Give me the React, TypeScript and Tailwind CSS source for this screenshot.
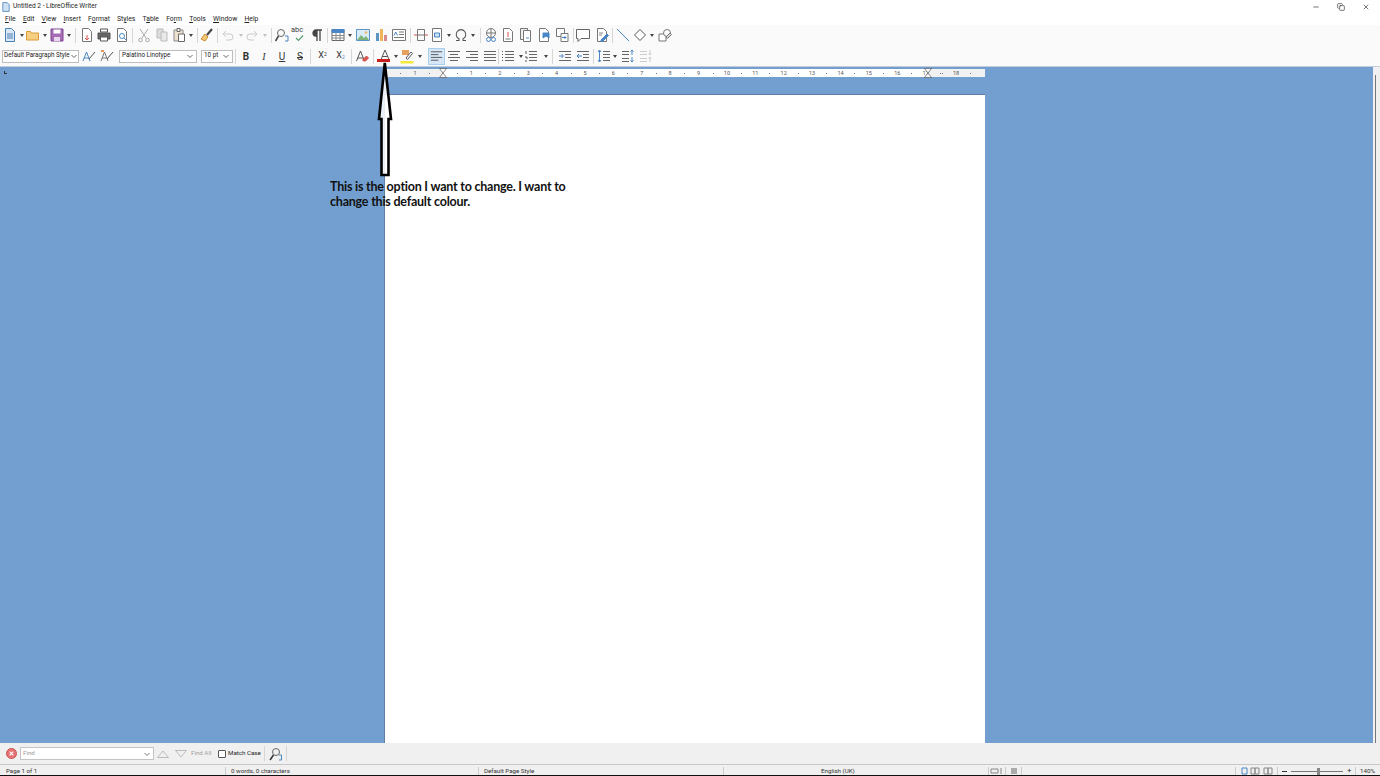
import type { ReactNode } from 'react';
import { Minus, Copy, X } from 'lucide-react';

const menus: [string, string, string][] = [
  ['', 'F', 'ile'], ['', 'E', 'dit'], ['', 'V', 'iew'], ['', 'I', 'nsert'], ['F', 'o', 'rmat'], ['St', 'y', 'les'],
  ['T', 'a', 'ble'], ['Fo', 'r', 'm'], ['', 'T', 'ools'], ['', 'W', 'indow'], ['', 'H', 'elp'],
];

// small 16x16 drawing wrapper
function Ico({ children, className = '' }: { children: ReactNode; className?: string }) {
  return (
    <span className={`flex h-4 w-4 shrink-0 items-center justify-center ${className}`}>
      <svg viewBox="0 0 16 16" className="h-4 w-4" fill="none" stroke="#555" strokeWidth="1">
        {children}
      </svg>
    </span>
  );
}

function Drop({ className = '' }: { className?: string }) {
  return (
    <span className={`flex h-4 w-1.5 shrink-0 items-center justify-center ${className}`}>
      <span className="h-0 w-0 border-x-[2.5px] border-t-[3px] border-x-transparent border-t-[#444]" />
    </span>
  );
}

function Sep({ className = '' }: { className?: string }) {
  return <span className={`h-[15px] w-px shrink-0 bg-[#d6d6d6] ${className}`} />;
}

function Lines({ rows, color = '#666' }: { rows: [number, number][]; color?: string }) {
  return (
    <>
      {rows.map(([a, b], i) => (
        <path key={i} d={`M${a} ${3.5 + i * 3}H${b}`} stroke={color} />
      ))}
    </>
  );
}

function Combo({ label, className, pad = 'pl-0.5' }: { label: string; className: string; pad?: string }) {
  return (
    <div className={`flex h-[13px] shrink-0 items-center justify-between border border-[#bdbdbd] bg-white pr-0.5 text-[6.3px] text-[#222] ${pad} ${className}`}>
      <span className="whitespace-nowrap">{label}</span>
      <svg viewBox="0 0 8 8" className="h-2 w-2 shrink-0" fill="none" stroke="#666"><path d="M1.5 3 4 5.5 6.5 3" /></svg>
    </div>
  );
}

function TopToolbar() {
  return (
    <div className="flex h-5 items-center pl-0.5">
      <Ico><path d="M3.5 1.5h6l3 3v10h-9z" fill="#dbe9f6" stroke="#4a7fb5" /><path d="M5 7h6M5 9h6M5 11h6" stroke="#4a7fb5" /></Ico>
      <Drop className="ml-px" />
      <Ico><path d="M1.5 4.5h4l1 1.5h7v7h-12z" fill="#f7cf83" stroke="#d89c3a" /></Ico>
      <Drop className="ml-px" />
      <Ico className="ml-px"><path d="M2 2h12v12H2z" fill="#a56cb5" stroke="#7c4490" /><path d="M4.5 2.5h7v4h-7z" fill="#fff" stroke="none" /><path d="M5 10h6v4H5z" fill="#e8d8ee" stroke="none" /></Ico>
      <Drop className="ml-px" />
      <Sep className="ml-[2.5px]" />
      <Ico className="ml-[3.5px]"><path d="M3.5 1.5h6l3 3v10h-9z" fill="#fff" stroke="#777" /><path d="M8 8v5M6 11l2 2 2-2" stroke="#d9534f" /></Ico>
      <Ico className="ml-px"><path d="M4.5 2h7v3h-7z" fill="#fff" /><path d="M2 6h12v6H2z" fill="#666" stroke="#555" /><path d="M4.5 10h7v4h-7z" fill="#fff" /></Ico>
      <Ico className="ml-0.5"><path d="M3.5 1.5h6l3 3v10h-9z" fill="#fff" stroke="#777" /><circle cx="8" cy="9" r="2.5" stroke="#4a86c5" /><path d="m10 11 2.5 2.5" stroke="#4a86c5" /></Ico>
      <Sep className="ml-[1.5px]" />
      <Ico className="ml-[3.5px]"><g stroke="#aaa"><path d="m4 2 6 9M12 2l-6 9" /><circle cx="4.5" cy="13" r="1.8" /><circle cx="11.5" cy="13" r="1.8" /></g></Ico>
      <Ico className="ml-0.5"><path d="M3 2h6v9H3z" fill="#ddd" stroke="#bbb" /><path d="M7 5h6v9H7z" fill="#e8e8e8" stroke="#bbb" /></Ico>
      <Ico className="ml-px"><path d="M3 3h9v11H3z" fill="#efe3d0" stroke="#888" /><path d="M6 1.5h3v3H6z" fill="#fff" stroke="#666" /><path d="M7.5 7h6v7.5h-6z" fill="#fff" stroke="#666" /></Ico>
      <Drop className="ml-px" />
      <Sep className="ml-[2.5px]" />
      <Ico className="ml-[1.5px]"><path d="m13 2-5 6" stroke="#444" strokeWidth="2" /><path d="M6 7l3 3-3 4-4-2z" fill="#f5c671" stroke="#c98f35" /></Ico>
      <Sep className="ml-[1.5px]" />
      <Ico className="ml-[2.5px]"><path d="M3 7h7a3 3 0 0 1 0 6H6M3 7l3-3M3 7l3 3" stroke="#ccc" /></Ico>
      <Drop className="ml-0.5 opacity-30" />
      <Ico><path d="M13 7H6a3 3 0 0 0 0 6h4M13 7l-3-3M13 7l-3 3" stroke="#ccc" /></Ico>
      <Drop className="ml-0.5 opacity-30" />
      <Sep className="ml-[2.5px]" />
      <Ico className="ml-[2.5px]"><circle cx="7" cy="6" r="3.5" stroke="#666" /><path d="M4.5 9 1.5 14" stroke="#444" strokeWidth="1.5" /><path d="M11 9h3v5h-3" stroke="#4a86c5" /></Ico>
      <span className="relative ml-px h-4 w-4 shrink-0">
        <span className="absolute left-0 top-[-2px] text-[7.5px] leading-[9px] text-[#444]">abc</span>
        <svg viewBox="0 0 16 16" className="absolute inset-0 h-4 w-4" fill="none" stroke="#5a9e6f" strokeWidth="1.2"><path d="m5 11 2.5 2.5L12 8.5" /></svg>
      </span>
      <Ico className="ml-0.5"><path d="M7 3h6M7 3a3 3 0 0 0 0 6h1V3zM8 3v11M11 3v11" stroke="#444" strokeWidth="1.3" fill="#444" /></Ico>
      <Sep className="ml-[1.5px]" />
      <Ico className="ml-[2.5px]"><path d="M2 2.5h12v11H2z" fill="#fff" stroke="#666" /><path d="M2 2.5h12v3H2z" fill="#4a86c5" stroke="#4a86c5" /><path d="M2 8.5h12M2 11h12M6 5.5v8M10 5.5v8" stroke="#888" /></Ico>
      <Drop className="ml-px" />
      <Ico className="ml-0.5"><path d="M1.5 2.5h13v11h-13z" fill="#d9ecf8" stroke="#5e94c4" /><path d="m2 13 4-5 3 3 2-2 3 4z" fill="#7fb37a" stroke="none" /><circle cx="11" cy="5.5" r="1.3" fill="#f4b860" stroke="none" /></Ico>
      <Ico className="ml-0.5"><path d="M3 6h3v8H3z" fill="#5e94c4" stroke="none" /><path d="M7 2h3v12H7z" fill="#f0b45a" stroke="none" /><path d="M11 8h3v6h-3z" fill="#d98a8a" stroke="none" /></Ico>
      <Ico className="ml-0.5"><path d="M1.5 2.5h13v11h-13z" fill="#fff" stroke="#777" /><path d="M8 5h5M8 7.5h5M3 10.5h10" stroke="#777" /><path d="M3 8.5 4.7 5l1.8 3.5" stroke="#4a86c5" /></Ico>
      <Sep className="ml-[2.5px]" />
      <Ico className="ml-[2.5px]"><path d="M1 8h3M12 8h3" stroke="#d9534f" /><path d="M4.5 2.5h7M4.5 13.5h7M4.5 2.5v11M11.5 2.5v11" stroke="#777" /><path d="M5 8h6" stroke="#777" /></Ico>
      <Ico><path d="M3.5 1.5h9v13h-9z" fill="#fff" stroke="#777" /><path d="M5.5 6h5v4h-5z" fill="#cfe2f3" stroke="#4a86c5" /></Ico>
      <Drop className="ml-px" />
      <Ico className="ml-px"><path d="M3 13.5h3v-1.7a4.8 4.8 0 1 1 4 0v1.7h3" stroke="#555" strokeWidth="1.1" /></Ico>
      <Drop className="ml-px" />
      <Sep className="ml-[3.5px]" />
      <Ico className="ml-[2.5px]"><circle cx="8" cy="6" r="4.5" stroke="#777" /><path d="M3.5 6h9M8 1.5v9" stroke="#777" /><circle cx="5.5" cy="12.5" r="2" stroke="#4a86c5" /><circle cx="10.5" cy="12.5" r="2" stroke="#4a86c5" /></Ico>
      <Ico className="ml-px"><path d="M3.5 1.5h6l3 3v10h-9z" fill="#fff" stroke="#777" /><path d="M8 5v5" stroke="#d9534f" /><path d="M5.5 12h5" stroke="#777" /></Ico>
      <Ico className="ml-0.5"><path d="M2.5 1.5h7v11h-7z" fill="#eee" stroke="#777" /><path d="M5.5 3.5h7v11h-7z" fill="#fff" stroke="#777" /><path d="M8 11h3" stroke="#4a86c5" /></Ico>
      <Ico className="ml-0.5"><path d="M3.5 1.5h6l3 3v10h-9z" fill="#fff" stroke="#777" /><path d="M7 6h6v5l-3-2-3 2z" fill="#4a86c5" stroke="#4a86c5" /></Ico>
      <Ico className="ml-0.5"><path d="M2.5 1.5h8v8h-8z" fill="#fff" stroke="#777" /><path d="M7 6.5h7v8H7z" fill="#fff" stroke="#777" /><path d="M8 10.5h4M10.5 9l1.5 1.5-1.5 1.500" stroke="#4a86c5" /></Ico>
      <Sep className="ml-[2.5px]" />
      <Ico className="ml-[1.5px]"><path d="M1.5 2.5h13v9H6l-3 3v-3H1.5z" fill="#fff" stroke="#666" /></Ico>
      <Ico className="ml-[3px]"><path d="M3.5 1.5h6l3 3v10h-9z" fill="#fff" stroke="#777" /><path d="M5 6h4M5 8h3" stroke="#888" /><path d="m7 13 6-6 1.5 1.5-6 6H7z" fill="#4a86c5" stroke="#4a86c5" /></Ico>
      <Sep className="ml-[1.5px]" />
      <Ico className="ml-[2.5px]"><path d="m2 2 12 12" stroke="#4a86c5" /></Ico>
      <Ico className="ml-px"><path d="M8 2.5 13.5 8 8 13.5 2.5 8z" fill="#fff" stroke="#555" /></Ico>
      <Drop className="ml-px" />
      <Ico className="ml-0.5"><path d="M2 7h7v7H2z" fill="#fff" stroke="#777" /><circle cx="10" cy="6" r="3.5" fill="#fff" stroke="#777" /><path d="m9 10 4-4 1.5 1.5-4 4z" fill="#d6d6d6" stroke="#777" /></Ico>
    </div>
  );
}

function FormatToolbar() {
  return (
    <div className="flex h-5 items-center pl-0.5 text-[#444]">
      <Combo label="Default Paragraph Style" className="w-[77px]" pad="pl-px" />
      <Ico className="ml-[2px]"><path d="M2 13 5.5 4 9 13M3 10h5" stroke="#4a86c5" /><path d="m8 11 6-7" stroke="#555" /></Ico>
      <Ico className="ml-0.5"><path d="M2 13 5.5 4 9 13M3 10h5" stroke="#777" /><path d="m8 11 6-7" stroke="#555" /><path d="M2 2h3v2H2z" fill="#e89a5a" stroke="none" /></Ico>
      <Combo label="Palatino Linotype" className="ml-1 w-[78px]" pad="pl-0.5" />
      <Combo label="10 pt" className="ml-1 w-8" pad="pl-0.5" />
      <Sep className="ml-0.5" />
      <span className="ml-[2px] flex h-4 w-4 shrink-0 items-center justify-center text-[10px] font-bold text-[#333]">B</span>
      <span className="ml-0.5 flex h-4 w-4 shrink-0 items-center justify-center text-[10px] italic text-[#333] [font-family:'Liberation_Serif',serif]">I</span>
      <span className="ml-0.5 flex h-4 w-4 shrink-0 items-center justify-center text-[10px] text-[#333] underline">U</span>
      <span className="ml-0.5 flex h-4 w-4 shrink-0 items-center justify-center text-[10px] text-[#333] line-through">S</span>
      <Sep className="ml-0.5" />
      <span className="ml-[3.5px] flex h-4 w-4 shrink-0 items-center justify-center text-[9px] text-[#333]">X<sup className="text-[5px]">2</sup></span>
      <span className="ml-0.5 flex h-4 w-4 shrink-0 items-center justify-center text-[9px] text-[#333]">X<sub className="text-[5px] text-[#4a86c5]">2</sub></span>
      <Sep className="ml-0.5" />
      <Ico className="ml-[2.5px]"><path d="M2.5 13 6.5 3l4 10M4 10h5" stroke="#555" /><path d="m8.5 12 4-4 2 2-3 3h-2z" fill="#d9534f" stroke="#d9534f" /></Ico>
      <Sep className="ml-[2.5px]" />
      <Ico className="ml-[3.5px]"><path d="M4 11.5 8 2l4 9.5M5.2 8.5h5.6" stroke="#555" /></Ico>
      <Drop />
      <Ico><path d="M3 2h7v5H3z" fill="#e8a15c" stroke="none" /><path d="m7 10 5-6 1.5 1.5-5 6z" fill="#fff" stroke="#555" /><path d="M1.5 13h13v2.5h-13z" fill="#f5ea3c" stroke="none" /></Ico>
      <Drop className="ml-[1.5px]" />
      <span className="ml-[5.5px] flex h-[17px] w-[17px] shrink-0 items-center justify-center border border-[#a8cfee] bg-[#d5e7f6]">
        <svg viewBox="0 0 16 16" className="h-4 w-4" fill="none"><Lines rows={[[2, 14], [2, 10], [2, 14], [2, 10]]} color="#555" /></svg>
      </span>
      <Ico className="ml-px"><Lines rows={[[2, 14], [4, 12], [2, 14], [4, 12]]} /></Ico>
      <Ico className="ml-0.5"><Lines rows={[[2, 14], [6, 14], [2, 14], [6, 14]]} /></Ico>
      <Ico className="ml-0.5"><Lines rows={[[2, 14], [2, 14], [2, 14], [2, 14]]} /></Ico>
      <Sep />
      <Ico className="ml-px"><Lines rows={[[5, 14], [5, 14], [5, 14], [5, 14]]} /><path d="M2 3.5h1M2 9.5h1M2 6.5h1M2 12.5h1" stroke="#555" /></Ico>
      <Drop className="ml-0.5" />
      <Ico className="-ml-px"><Lines rows={[[6, 14], [6, 14], [6, 14], [6, 14]]} /><path d="M3 3v3M3 8v2h2M2 13h2" stroke="#555" /></Ico>
      <Drop className="ml-1" />
      <Sep className="ml-[2.5px]" />
      <Ico className="ml-[4.5px]"><Lines rows={[[2, 14], [8, 14], [8, 14], [2, 14]]} /><path d="M2 8h4M4.5 6 6.5 8l-2 2" stroke="#4a86c5" /></Ico>
      <Ico className="ml-0.5"><Lines rows={[[2, 14], [8, 14], [8, 14], [2, 14]]} /><path d="M7 8H2M4 6 2 8l2 2" stroke="#4a86c5" /></Ico>
      <Sep className="ml-[1.5px]" />
      <Ico className="ml-[2.5px]"><Lines rows={[[7, 14], [7, 14], [7, 14], [7, 14]]} /><path d="M3.5 2v12M2 4l1.5-2L5 4M2 12l1.5 2L5 12" stroke="#4a86c5" /></Ico>
      <Drop />
      <Ico className="ml-[2px]"><path d="M2 3.5h7M2 6.5h7M2 10.5h7M2 13.5h7" stroke="#666" /><path d="M12 7V2M10.5 3.5 12 2l1.5 1.5M12 9v5M10.5 12.5 12 14l1.5-1.5" stroke="#4a86c5" /></Ico>
      <Ico className="ml-0.5 opacity-30"><path d="M2 3.5h7M2 6.5h7M2 10.5h7M2 13.5h7" stroke="#666" /><path d="M12 2v5M10.5 5.5 12 7l1.5-1.5M12 14V9M10.5 10.5 12 9l1.5 1.5" stroke="#666" /></Ico>
    </div>
  );
}

function Hourglass({ className }: { className: string }) {
  return (
    <svg viewBox="0 0 8 10" className={`absolute top-[-1px] h-[10px] w-2 ${className}`} fill="#fff" stroke="#555" strokeWidth="0.7">
      <path d="M.5.5h7L.5 9.5h7z" />
    </svg>
  );
}

function Ruler() {
  const nums = ['', '1', '2', '3', '4', '5', '6', '7', '8', '9', '10', '11', '12', '13', '14', '15', '16', '17'];
  return (
    <div className="relative ml-[385px] mt-0.5 flex h-2 w-[600px] bg-[#f1f1f1] text-[5.5px] leading-2 text-[#555]">
      <div className="flex w-[58px] shrink-0 items-center pl-[15px]">
        <span className="h-px w-px bg-[#777]" />
        <span className="ml-[10px] w-2 text-center">1</span>
        <span className="ml-[10px] h-px w-px bg-[#777]" />
      </div>
      <div className="flex w-[485px] shrink-0 items-center bg-white">
        {nums.map((n) => (
          <div key={n} className="flex w-[28.4px] shrink-0 items-center">
            <span className="-ml-1 w-2 text-center">{n}</span>
            <span className="ml-[10px] h-px w-px bg-[#777]" />
          </div>
        ))}
      </div>
      <div className="flex flex-1 items-center pl-[14px]">
        <span className="h-px w-px bg-[#777]" />
        <span className="ml-[9px] w-2 text-center">18</span>
        <span className="ml-[10px] h-px w-px bg-[#777]" />
      </div>
      <Hourglass className="left-[54px]" />
      <Hourglass className="left-[539px]" />
    </div>
  );
}

function FindBar() {
  return (
    <div className="flex h-[21px] shrink-0 items-center bg-[#f0f0f0] pl-1.5 text-[6.2px]">
      <svg viewBox="0 0 12 12" className="h-[11px] w-[11px] shrink-0"><circle cx="6" cy="6" r="5.5" fill="#e57373" stroke="#c94f4f" /><path d="m4 4 4 4M8 4 4 8" stroke="#fff" strokeWidth="1.2" /></svg>
      <div className="ml-[3px] flex h-[13px] w-[134px] shrink-0 items-center justify-between border border-[#c4c4c4] bg-white px-0.5 text-[#999]">
        <span>Find</span>
        <svg viewBox="0 0 8 8" className="h-2 w-2" fill="none" stroke="#777"><path d="M1.5 3 4 5.5 6.5 3" /></svg>
      </div>
      <svg viewBox="0 0 12 8" className="ml-[3px] h-2 w-3 shrink-0" fill="none" stroke="#bbb"><path d="M.5 7.5 6 1l5.5 6.5z" /></svg>
      <svg viewBox="0 0 12 8" className="ml-1.5 h-2 w-3 shrink-0" fill="none" stroke="#bbb"><path d="M.5.5 6 7 11.5.5z" /></svg>
      <span className="ml-1 w-[23px] shrink-0 whitespace-nowrap text-[#a0a0a0]">Find All</span>
      <span className="ml-1 h-2 w-2 shrink-0 rounded-[1px] border border-[#555] bg-white" />
      <span className="ml-0.5 w-[32px] shrink-0 whitespace-nowrap text-[#222]">Match Case</span>
      <Sep className="ml-1" />
      <Ico className="ml-[2.5px]"><circle cx="8" cy="6" r="3.5" stroke="#666" /><path d="M5.5 9 2 14" stroke="#333" strokeWidth="1.5" /><path d="M11 9h2.5v5H11" stroke="#4a86c5" /></Ico>
      <Sep className="ml-[2.5px]" />
    </div>
  );
}

function StatusBar() {
  return (
    <div className="flex h-[11px] shrink-0 items-center border-t border-[#c8c8c8] bg-[#f0f0f0] pt-0.5 text-[6.2px] leading-2 text-[#333]">
      <div className="w-[226px] shrink-0 whitespace-nowrap border-r border-[#ccc] pl-1.5">Page 1 of 1</div>
      <div className="w-[252px] shrink-0 whitespace-nowrap pl-[5px]">0 words, 0 characters</div>
      <div className="w-[245px] shrink-0 whitespace-nowrap border-l border-[#ccc] pl-[5px]">Default Page Style</div>
      <div className="w-[265px] shrink-0 whitespace-nowrap border-l border-[#ccc] pl-[97px]">English (UK)</div>
      <div className="flex h-2 w-[17px] shrink-0 items-center justify-center border-l border-[#ccc]">
        <svg viewBox="0 0 14 8" className="h-2 w-3.5" fill="none" stroke="#888"><path d="M1 2h7v4H1zM11 1v6" /></svg>
      </div>
      <div className="flex h-2 w-4 shrink-0 items-center justify-center border-l border-[#ccc]">
        <svg viewBox="0 0 8 8" className="h-2 w-2" fill="#aaa"><path d="M1 1h6v6H1z" /></svg>
      </div>
      <div className="h-2 w-4 shrink-0 border-l border-[#ccc]" />
      <div className="w-[198px] shrink-0 border-l border-[#ccc]" />
      <div className="flex h-2 w-[42px] shrink-0 items-center justify-center border-l border-[#ccc]">
        <svg viewBox="0 0 32 8" className="h-2 w-8" fill="none" stroke="#888"><path d="M1 1h5v6H1z" stroke="#4a86c5" /><path d="M10 1h4v6h-4zM14 1h4v6h-4zM23 1h4v6h-4zM27 1h4v6h-4z" /></svg>
      </div>
      <div className="flex h-2 w-[78px] shrink-0 items-center border-l border-[#ccc] pl-1">
        <span className="h-px w-[5px] bg-[#333]" />
        <span className="relative ml-1 h-px w-[52px] bg-[#777]">
          <span className="absolute left-[26px] top-[-3px] h-[7px] w-[3px] bg-[#888]" />
        </span>
        <span className="ml-1 text-[8px] leading-2">+</span>
      </div>
      <div className="flex-1 whitespace-nowrap border-l border-[#ccc] pl-1">140%</div>
    </div>
  );
}

export default function App() {
  return (
    <div className="relative flex h-[776px] w-[1380px] flex-col overflow-hidden bg-white [font-family:Roboto,sans-serif]">
      {/* Title bar */}
      <div className="flex h-[13px] shrink-0 items-center pl-0.5 text-[6.6px] text-[#222]">
        <svg viewBox="0 0 10 12" className="h-[10px] w-2 shrink-0" fill="#cfe2f3" stroke="#4a7fb5"><path d="M1 .5h5.5l2.5 2.5v8.500H1z" /></svg>
        <span className="ml-[3px] whitespace-nowrap">Untitled 2 - LibreOffice Writer</span>
        <div className="ml-auto flex items-center gap-[17px] pr-[10px] text-[#333]">
          <Minus className="h-2 w-2" />
          <Copy className="h-2 w-2" />
          <X className="h-2 w-2" />
        </div>
      </div>

      {/* Menu bar */}
      <div className="flex h-3 shrink-0 items-center gap-[7.2px] pl-[5px] text-[6.8px] text-[#222]">
        {menus.map(([a, b, c]) => (
          <span key={a + b + c} className="whitespace-nowrap">
            {a}<u>{b}</u>{c}
          </span>
        ))}
      </div>

      {/* Toolbars */}
      <div className="h-[42px] shrink-0 border-b border-[#c3ccd8] bg-[#fafafa]">
        <TopToolbar />
        <div className="mt-px"><FormatToolbar /></div>
      </div>

      {/* Document area */}
      <div className="flex min-h-0 flex-1">
        <div className="relative min-w-0 flex-1 overflow-hidden bg-[#729fd0]">
          <span className="absolute left-1 top-1 h-[3px] w-[3px] border-b border-l border-[#333]" />
          <Ruler />
          <div className="ml-[384px] mt-[17px] h-[660px] w-[601px] border-l border-t border-[#5f7fa5] bg-white" />
        </div>
        <div className="w-[7px] shrink-0 bg-[#f0f0f0] pl-0.5 pt-2">
          <div className="h-full w-px bg-[#777]" />
        </div>
      </div>

      <FindBar />
      <StatusBar />
      <div className="h-px shrink-0 bg-[#111]" />

      {/* Red colour bar and the hand drawn annotation */}
      <span className="absolute left-[377px] top-[59px] h-[3px] w-[13px] bg-[#c8201e]" />
      <svg viewBox="0 0 20 122" className="absolute left-[375px] top-[58px] h-[122px] w-5" fill="none" stroke="#000" strokeWidth="2.6">
        <path d="M6.5 117V61H4L9.8 5 16 61h-2.5v56z" fill="#fff" fillOpacity="0.85" strokeLinejoin="miter" />
      </svg>
      <p className="absolute left-[330px] top-[179px] w-[245px] text-[12.5px] font-bold leading-[15px] tracking-[-0.22px] text-[#111] [font-family:Lato,sans-serif]">
        This is the option I want to change. I want to change this default colour.
      </p>
    </div>
  );
}
